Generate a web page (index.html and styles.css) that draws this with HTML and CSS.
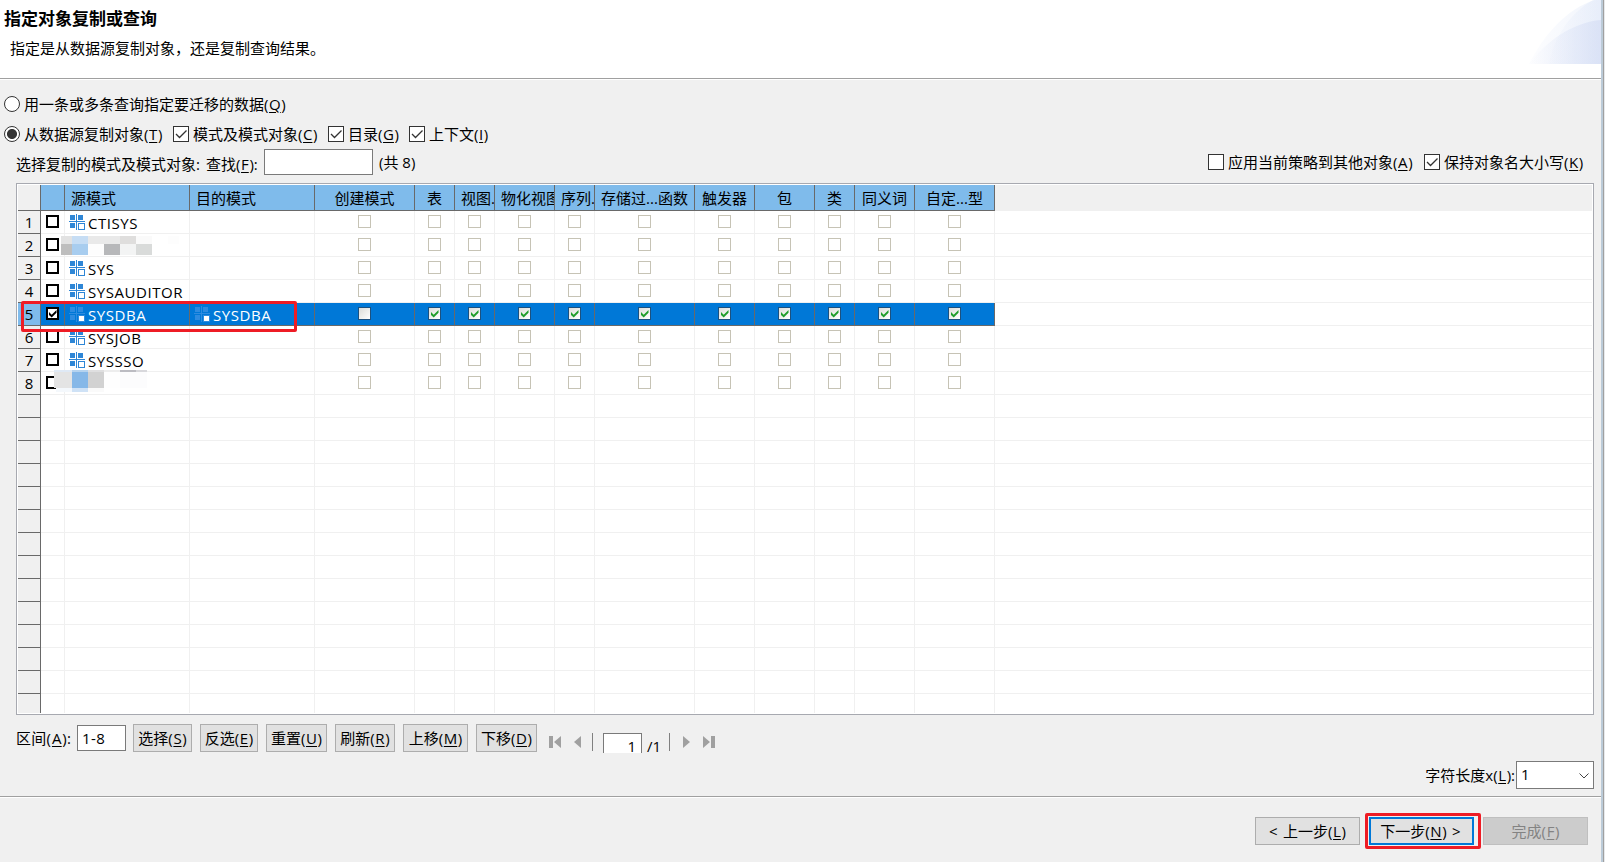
FILE: index.html
```html
<!DOCTYPE html>
<html lang="zh-CN">

<head>
    <meta charset="UTF-8">
    <meta name="viewport" content="width=device-width, initial-scale=1.0">
    <title>数据迁移</title>
    <link rel="stylesheet" href="styles.css">
</head>

<body>
    <svg width="0" height="0" class="defs">
        <symbol id="schema" viewBox="0 0 16 16">
            <path d="M1 1h5v5h-5zM9 1h5v5h-5zM1 9h5v5h-5zM7 0h1v16h-1zM0 7h16v1h-16z" fill="currentColor" />
            <path class="corner" d="M9.5 9.5h6v6h-6z" fill="#fff" stroke="currentColor" />
        </symbol>
        <symbol id="tick" viewBox="0 0 16 16">
            <path d="M3 8l3.5 3.5 7-7" fill="none" stroke="#333" stroke-width="1.3" />
        </symbol>
        <symbol id="mini" viewBox="0 0 13 13">
            <path d="M3 5l2.7 2.7 4.8-4.8v2.9l-4.8 4.8-2.7-2.7z" fill="currentColor" />
        </symbol>
    </svg>

    <div class="wizard">
        <div class="header">
            <h1>指定对象复制或查询</h1>
            <p>指定是从数据源复制对象，还是复制查询结果。</p>
            <svg class="banner" width="90" height="64">
                <defs>
                    <linearGradient id="fade">
                        <stop offset="0" stop-color="#dbe2f6" stop-opacity="0" />
                        <stop offset="1" stop-color="#d3dcf4" stop-opacity=".65" />
                    </linearGradient>
                    <linearGradient id="fade2">
                        <stop offset="0" stop-color="#e6ecfa" stop-opacity=".1" />
                        <stop offset="1" stop-color="#dde6f8" stop-opacity=".45" />
                    </linearGradient>
                </defs>
                <path d="M18 64C32 36 56 8 84 0h6v64z" fill="url(#fade2)" />
                <path d="M38 64C42 38 60 12 82 0h8v64z" fill="url(#fade2)" />
                <path d="M18 64C34 42 62 22 90 20v44z" fill="url(#fade)" />
            </svg>
        </div>

        <div class="content">
            <div class="line first">
                <span class="radio"></span>
                <span class="text">用一条或多条查询指定要迁移的数据(<u>Q</u>)</span>
            </div>
            <div class="line second">
                <span class="radio on"></span>
                <span class="text w_copy">从数据源复制对象(<u>T</u>)</span>
                <span class="check"><svg><use href="#tick" /></svg></span>
                <span class="text w_mode">模式及模式对象(<u>C</u>)</span>
                <span class="check"><svg><use href="#tick" /></svg></span>
                <span class="text w_dir">目录(<u>G</u>)</span>
                <span class="check"><svg><use href="#tick" /></svg></span>
                <span class="text">上下文(<u>I</u>)</span>
            </div>
            <div class="line third">
                <span class="text w_pick">选择复制的模式及模式对象:</span>
                <span class="text w_find">查找(<u>F</u>):</span>
                <span class="field find"></span>
                <span class="text total">(共 8)</span>
                <div class="right">
                    <span class="check"></span>
                    <span class="text w_apply">应用当前策略到其他对象(<u>A</u>)</span>
                    <span class="check"><svg><use href="#tick" /></svg></span>
                    <span class="text w_keep">保持对象名大小写(<u>K</u>)</span>
                </div>
            </div>

            <div class="table">
                <div class="row head">
                    <div class="cell num"></div>
                    <div class="cell"></div>
                    <div class="cell left">源模式</div>
                    <div class="cell left">目的模式</div>
                    <div class="cell">创建模式</div>
                    <div class="cell">表</div>
                    <div class="cell left">视图...</div>
                    <div class="cell left">物化视图</div>
                    <div class="cell left">序列...</div>
                    <div class="cell">存储过...函数</div>
                    <div class="cell">触发器</div>
                    <div class="cell">包</div>
                    <div class="cell">类</div>
                    <div class="cell">同义词</div>
                    <div class="cell">自定...型</div>
                    <div class="cell rest"></div>
                </div>
                <div class="rows"></div>
                <div class="mark mark_row"></div>
            </div>

            <div class="tools">
                <span class="text w_range">区间(<u>A</u>):</span>
                <span class="field range">1-8</span>
                <span class="btn b1">选择(<u>S</u>)</span>
                <span class="btn b2">反选(<u>E</u>)</span>
                <span class="btn b3">重置(<u>U</u>)</span>
                <span class="btn b4">刷新(<u>R</u>)</span>
                <span class="btn b5">上移(<u>M</u>)</span>
                <span class="btn b6">下移(<u>D</u>)</span>
                <div class="pager">
                    <svg width="12" height="12"><path d="M0 0h4v12h-4zM12 0v12l-7-6z" /></svg>
                    <svg width="7" height="12" class="prev"><path d="M7 0v12l-7-6z" /></svg>
                    <i class="sep"></i>
                    <span class="page">1</span>
                    <span class="pages">/1</span>
                    <i class="sep"></i>
                    <svg width="7" height="12" class="next"><path d="M0 0v12l7-6z" /></svg>
                    <svg width="12" height="12" class="last"><path d="M8 0h4v12h-4zM0 0v12l7-6z" /></svg>
                </div>
            </div>

            <div class="length">
                <span class="text">字符长度x(<u>L</u>):</span>
                <span class="select">1<svg width="10" height="6"><path d="M.5 .5l4.5 4.5 4.5-4.5" fill="none" stroke="#444" /></svg></span>
            </div>
        </div>

        <div class="footer">
            <span class="btn">&lt; 上一步(<u>L</u>)</span>
            <span class="btn default">下一步(<u>N</u>) &gt;<i class="mark mark_next"></i></span>
            <span class="btn off">完成(<u>F</u>)</span>
        </div>
    </div>

    <script>
        const names = ['CTISYS', '', 'SYS', 'SYSAUDITOR', 'SYSDBA', 'SYSJOB', 'SYSSSO', ''];
        const selected = 4;
        const icon = '<svg class="schema"><use href="#schema"/></svg>';
        const tick = '<svg class="mini"><use href="#mini"/></svg>';
        // x, y, width, height, color of hidden names
        const masks = {
            1: [[20, 2, 11, 8, '#e2e2e2'], [31, 2, 16, 8, '#c6ddf4'], [47, 2, 32, 8, '#e9e9e9'], [79, 2, 16, 8, '#dfdedd'], [95, 2, 16, 8, '#fafafa'],
                [20, 10, 11, 11, '#bebebe'], [31, 10, 16, 11, '#a8cdef'], [47, 10, 16, 11, '#fdfdfd'], [63, 10, 16, 11, '#b7b8ba'], [79, 10, 16, 11, '#f3f4f4'], [95, 10, 16, 11, '#d9dbda'], [127, 2, 11, 8, '#fdfdfd']],
            7: [[13, -2, 18, 2, '#dfe9f5'], [31, -2, 16, 2, '#b5d3ef'], [47, -2, 16, 2, '#dfdfe0'], [63, -2, 16, 2, '#ededed'], [79, -2, 16, 2, '#bcbcc2'], [95, -2, 11, 2, '#d8d8dc'],
                [13, 0, 18, 16, '#e4e4e4'], [31, 0, 16, 16, '#86b8e8'], [47, 0, 16, 16, '#d2d2d2'], [63, 0, 16, 16, '#fefefe'], [79, 0, 27, 16, '#fcfcfd'],
                [15, 16, 16, 4, '#f4f8fc'], [31, 16, 16, 4, '#cfe2f6'], [47, 16, 16, 4, '#fafafa']]
        };

        let html = '';
        for (let i = 0; i < 22; i++) {
            const used = i < names.length;
            const on = i === selected;
            const name = names[i] ? icon + names[i] : '';
            html += `<div class="row${on ? ' selected' : ''}">`;
            html += `<div class="cell num">${used ? i + 1 : ''}</div>`;
            html += `<div class="cell">${used ? '<span class="pick">' + (on ? tick : '') + '</span>' : ''}</div>`;
            html += `<div class="cell name">${used ? name : ''}</div>`;
            html += `<div class="cell name">${on ? name : ''}</div>`;
            for (let j = 0; j < 11; j++) {
                html += `<div class="cell">${used ? '<span class="box">' + (on && j ? tick : '') + '</span>' : ''}</div>`;
            }
            html += '<div class="cell rest"></div>';
            if (masks[i]) {
                html += '<svg class="mask" width="140" height="23" shape-rendering="crispEdges">';
                html += masks[i].map(m => `<rect x="${m[0]}" y="${m[1]}" width="${m[2]}" height="${m[3]}" fill="${m[4]}"/>`).join('');
                html += '</svg>';
            }
            html += '</div>';
        }
        document.querySelector('.rows').innerHTML = html;
    </script>
</body>

</html>
```
FILE: styles.css
```css
* {
    box-sizing: border-box;
}

body {
    margin: 0;
    display: flex;
    width: 1605px;
    height: 862px;
    overflow: hidden;
    background-color: #e6e9ec;
    font-family: "Open Sans", "Noto Sans CJK SC", sans-serif;
    font-size: 15px;
    line-height: 20px;
    color: #000;
    white-space: nowrap;
}

.defs {
    position: absolute;
}

u {
    margin: 0 .6px;
    text-decoration: underline;
    text-decoration-thickness: 1px;
    text-underline-offset: 2px;
}

.wizard {
    width: 1604px;
    height: 862px;
    background-color: #f0f0f0;
    border-right: 1px solid #a0a0a0;
    box-shadow: inset -2px 0 #bccbd8;
    padding-right: 2px;
}

/* header */
.header {
    position: relative;
    height: 80px;
    padding: 9px 0 0 4px;
    background-color: #fff;
    border-bottom: 1px solid #fff;
    box-shadow: inset 0 -1px #a0a0a0;
}

.header h1 {
    margin: 0;
    font-size: 17px;
    line-height: 20px;
    font-weight: bold;
}

.header p {
    margin: 9px 0 0 6px;
}

.banner {
    position: absolute;
    right: 0;
    top: 0;
}

/* options */
.line {
    display: flex;
    align-items: center;
    height: 20px;
}

.first {
    margin-top: 14px;
    padding-left: 4px;
}

.second {
    margin-top: 10px;
    padding-left: 4px;
}

.third {
    height: 26px;
    margin-top: 5px;
    padding: 0 20px 0 16px;
}

.radio {
    width: 16px;
    height: 16px;
    margin-right: 4px;
    border: 1px solid #333;
    border-radius: 50%;
    background-color: #fff;
}

.radio.on {
    background: radial-gradient(circle, #333 4.6px, #fff 5.4px);
}

.check {
    width: 16px;
    height: 16px;
    margin-right: 4px;
    border: 1px solid #333;
    background-color: #fff;
}

.check svg {
    display: block;
    width: 16px;
    height: 16px;
    margin: -1px;
}

.w_copy {
    width: 149px;
}

.w_mode {
    width: 135px;
}

.w_dir {
    width: 61px;
}

.w_pick {
    width: 190px;
    padding-top: 3px;
}

.w_find {
    width: 58px;
    padding-top: 3px;
}

.field {
    height: 26px;
    border: 1px solid #7a7a7a;
    background-color: #fff;
}

.find {
    width: 109px;
    margin-right: 6px;
}

.right {
    display: flex;
    align-items: center;
    margin-left: auto;
}

.w_apply {
    width: 196px;
}

.w_keep {
    width: 137px;
}

/* table */
.table {
    position: relative;
    width: 1578px;
    height: 532px;
    margin: 8px 0 0 16px;
    padding: 1px;
    border: 1px solid #a7a9b0;
    background-color: #fff;
}

.row {
    position: relative;
    display: grid;
    grid-template-columns: 23px 24px 125px 125px 100px 40px 40px 60px 40px 100px 60px 60px 40px 60px 80px 1fr;
    height: 23px;
}

.rows {
    height: 502px;
    overflow: hidden;
}

.cell {
    display: flex;
    justify-content: center;
    overflow: hidden;
    border-right: 1px solid #f0f0f0;
    border-bottom: 1px solid #f0f0f0;
}

.cell.rest {
    border-right: none;
}

.head {
    height: 26px;
}

.head .cell {
    padding-top: 3px;
    background-color: #7fbbeb;
    border-color: #696969;
}

.head .left {
    justify-content: flex-start;
    padding-left: 6px;
}

.head .num,
.num {
    background-color: #f0f0f0;
    border-color: #696969;
}

.head .rest {
    background-color: #f0f0f0;
    border-color: #f0f0f0;
}

.num {
    padding-top: 1px;
}

.name {
    justify-content: flex-start;
    padding: 2px 0 0 4px;
    letter-spacing: .55px;
}

.schema {
    width: 16px;
    height: 16px;
    margin: 1px 3px 0 0;
    color: #2e86d6;
    shape-rendering: crispEdges;
}

.pick,
.box {
    width: 13px;
    height: 13px;
    margin-top: 4px;
    background-color: #fff;
}

.pick {
    margin-right: 1px;
    border: 2px solid #000;
}

.pick .mini {
    margin: -2px;
    color: #000;
}

.box {
    border: 1px solid #c6c3b5;
}

.mini {
    display: block;
    width: 13px;
    height: 13px;
    margin: -1px;
    color: #1f9d2b;
}

.selected .cell {
    background-color: #0078d7;
    border-color: #696969;
    color: #fff;
}

.selected .num {
    background-color: #7fbbeb;
    color: #000;
}

.selected .rest {
    background-color: #fff;
    border-color: #f0f0f0;
}

.selected .box {
    border-color: #1c5180;
    background: linear-gradient(135deg, #dcdcd8, #fff);
}

.selected .schema {
    color: #2d8be0;
}

.mask {
    position: absolute;
    left: 23px;
    top: 0;
    overflow: visible;
}

.mark {
    position: absolute;
    border: 3px solid #ee1c25;
    border-radius: 2px;
}

.mark_row {
    left: 4px;
    top: 117px;
    width: 276px;
    height: 31px;
}

/* bottom tools */
.tools {
    display: flex;
    height: 29px;
    margin-top: 9px;
    padding-left: 16px;
}

.w_range {
    width: 61px;
    padding-top: 4px;
    letter-spacing: .3px;
}

.range {
    width: 49px;
    margin: 1px 7px 0 0;
    padding: 2px 0 0 4px;
    letter-spacing: .4px;
}

.btn {
    height: 28px;
    line-height: 20px;
    padding-top: 3px;
    text-align: center;
    background-color: #e1e1e1;
    border: 1px solid #adadad;
}

.b1 {
    width: 59px;
    margin-right: 8px;
}

.b2 {
    width: 58px;
    margin-right: 8px;
}

.b3 {
    width: 61px;
    margin-right: 8px;
}

.b4 {
    width: 60px;
    margin-right: 8px;
}

.b5 {
    width: 65px;
    margin-right: 8px;
}

.b6 {
    width: 61px;
}

.pager {
    display: flex;
    height: 20px;
    margin: 9px 0 0 12px;
    overflow: hidden;
}

.pager svg {
    margin-top: 3px;
    fill: #a0a0a0;
}

.pager .prev {
    margin-left: 13px;
}

.sep {
    width: 1px;
    height: 18px;
    margin-left: 11px;
    background-color: #808080;
}

.page {
    width: 39px;
    height: 26px;
    margin-left: 10px;
    padding: 2px 5px 0 0;
    text-align: right;
    background-color: #fff;
    border: 1px solid #7a7a7a;
}

.pages {
    width: 11px;
    margin: 3px 0 0 5px;
}

.pager .next {
    margin-left: 13px;
}

.pager .last {
    margin-left: 13px;
}

.length {
    display: flex;
    justify-content: flex-end;
    height: 35px;
    margin-top: 8px;
    padding-right: 7px;
}

.length .text {
    padding-top: 4px;
}

.select {
    display: flex;
    justify-content: space-between;
    width: 78px;
    height: 28px;
    margin-left: 1px;
    padding: 2px 4px 0 4px;
    background-color: #fff;
    border: 1px solid #7a7a7a;
}

.select svg {
    margin-top: 9px;
}

/* footer */
.footer {
    display: flex;
    justify-content: flex-end;
    gap: 9px;
    height: 66px;
    padding: 20px 13px 0 0;
    border-top: 1px solid #a0a0a0;
    box-shadow: inset 0 1px #fff;
}

.footer .btn {
    width: 105px;
    word-spacing: 1.5px;
}

.footer .default {
    position: relative;
    padding: 2px 2px 0 0;
    border: 2px solid #0078d7;
}

.footer .off {
    color: #838383;
    background-color: #cccccc;
    border-color: #bfbfbf;
}

.mark_next {
    left: -6px;
    top: -6px;
    width: 116px;
    height: 36px;
}
```
